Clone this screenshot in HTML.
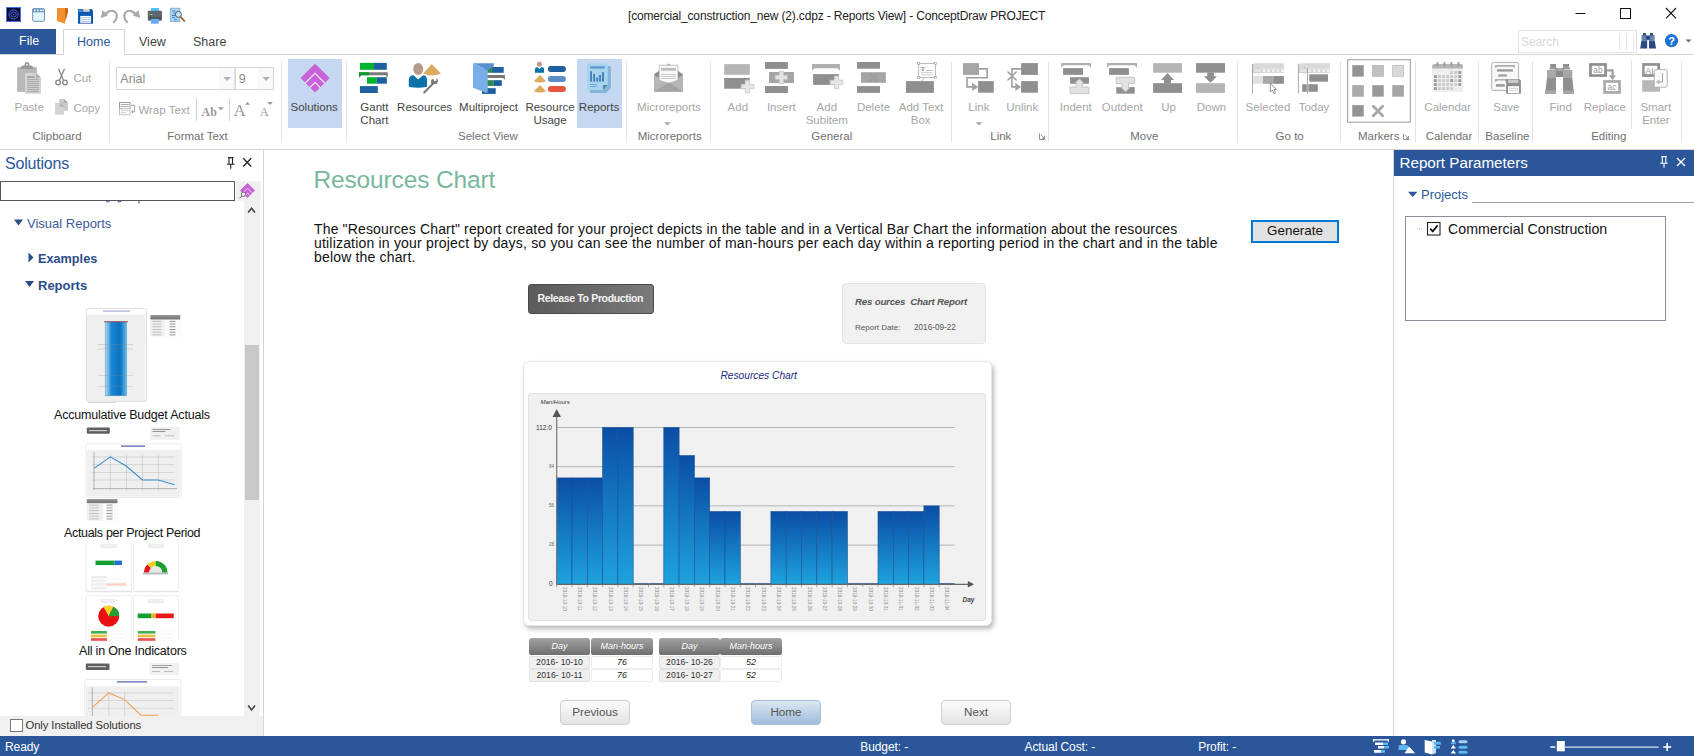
<!DOCTYPE html>
<html><head><meta charset="utf-8">
<style>
*{margin:0;padding:0;box-sizing:border-box}
html,body{width:1694px;height:756px;overflow:hidden;background:#fff;font-family:"Liberation Sans",sans-serif;color:#444}
.a{position:absolute;white-space:nowrap}
.rl{position:absolute;font-size:12px;color:#a0a0a0;text-align:center;line-height:13px;white-space:nowrap}
.gl{position:absolute;font-size:12px;color:#666;white-space:nowrap;top:129px}
.sep{position:absolute;top:61px;width:1px;height:80px;background:#e1e1e1}
</style></head><body>
<!-- title bar -->
<div class="a" style="left:628px;top:8.5px;font-size:12px;color:#222;letter-spacing:-0.165px">[comercial_construction_new (2).cdpz - Reports View] - ConceptDraw PROJECT</div>
<!-- tabs -->
<div class="a" style="left:0;top:29px;width:56px;height:25px;background:#2b579a;color:#fff;font-size:12.5px;line-height:25px;padding-left:19px">File</div>
<div class="a" style="left:63px;top:29px;width:62px;height:26px;border:1px solid #d5d5d5;border-bottom:none;background:#fff"></div>
<div class="a" style="left:0;top:54px;width:1694px;height:1px;background:#d5d5d5"></div>
<div class="a" style="left:64px;top:54px;width:60px;height:1px;background:#fff"></div>
<div class="a" style="left:77px;top:35px;font-size:12.5px;color:#2b579a">Home</div>
<div class="a" style="left:139px;top:35px;font-size:12.5px;color:#444">View</div>
<div class="a" style="left:193px;top:35px;font-size:12.5px;color:#444">Share</div>
<!-- ribbon bottom -->
<div class="a" style="left:0;top:149px;width:1694px;height:1px;background:#d5d5d5"></div>
<!--RIBBON-->
<div class="a" style="left:288px;top:59px;width:54px;height:69px;background:#c5d7f1"></div>
<div class="a" style="left:577px;top:59px;width:45px;height:69px;background:#c5d7f1"></div>
<div class="a" style="left:109px;top:61px;width:1px;height:81px;background:#e2e2e2"></div>
<div class="a" style="left:281px;top:61px;width:1px;height:81px;background:#e2e2e2"></div>
<div class="a" style="left:346px;top:61px;width:1px;height:81px;background:#e2e2e2"></div>
<div class="a" style="left:626px;top:61px;width:1px;height:81px;background:#e2e2e2"></div>
<div class="a" style="left:710px;top:61px;width:1px;height:81px;background:#e2e2e2"></div>
<div class="a" style="left:951px;top:61px;width:1px;height:81px;background:#e2e2e2"></div>
<div class="a" style="left:1048px;top:61px;width:1px;height:81px;background:#e2e2e2"></div>
<div class="a" style="left:1237px;top:61px;width:1px;height:81px;background:#e2e2e2"></div>
<div class="a" style="left:1340px;top:61px;width:1px;height:81px;background:#e2e2e2"></div>
<div class="a" style="left:1415px;top:61px;width:1px;height:81px;background:#e2e2e2"></div>
<div class="a" style="left:1478px;top:61px;width:1px;height:81px;background:#e2e2e2"></div>
<div class="a" style="left:1532px;top:61px;width:1px;height:81px;background:#e2e2e2"></div>
<div class="a" style="left:1681px;top:61px;width:1px;height:81px;background:#e2e2e2"></div>
<div class="a" style="left:1631px;top:60px;width:1px;height:69px;background:#e2e2e2"></div>
<div class="a" style="left:-3px;width:120px;top:129px;height:14px;line-height:14px;text-align:center;font-size:11.5px;color:#707070">Clipboard</div>
<div class="a" style="left:137.5px;width:120px;top:129px;height:14px;line-height:14px;text-align:center;font-size:11.5px;color:#707070">Format Text</div>
<div class="a" style="left:428px;width:120px;top:129px;height:14px;line-height:14px;text-align:center;font-size:11.5px;color:#707070">Select View</div>
<div class="a" style="left:609.7px;width:120px;top:129px;height:14px;line-height:14px;text-align:center;font-size:11.5px;color:#707070">Microreports</div>
<div class="a" style="left:771.8px;width:120px;top:129px;height:14px;line-height:14px;text-align:center;font-size:11.5px;color:#707070">General</div>
<div class="a" style="left:940.8px;width:120px;top:129px;height:14px;line-height:14px;text-align:center;font-size:11.5px;color:#707070">Link</div>
<div class="a" style="left:1084.3px;width:120px;top:129px;height:14px;line-height:14px;text-align:center;font-size:11.5px;color:#707070">Move</div>
<div class="a" style="left:1229.7px;width:120px;top:129px;height:14px;line-height:14px;text-align:center;font-size:11.5px;color:#707070">Go to</div>
<div class="a" style="left:1318.7px;width:120px;top:129px;height:14px;line-height:14px;text-align:center;font-size:11.5px;color:#707070">Markers</div>
<div class="a" style="left:1389px;width:120px;top:129px;height:14px;line-height:14px;text-align:center;font-size:11.5px;color:#707070">Calendar</div>
<div class="a" style="left:1447.4px;width:120px;top:129px;height:14px;line-height:14px;text-align:center;font-size:11.5px;color:#707070">Baseline</div>
<div class="a" style="left:1548.8px;width:120px;top:129px;height:14px;line-height:14px;text-align:center;font-size:11.5px;color:#707070">Editing</div>
<div class="a" style="left:-30.8px;width:120px;top:100px;height:14px;line-height:14px;text-align:center;font-size:11.5px;color:#a6a6a6">Paste</div>
<div class="a" style="left:73.4px;top:70.6px;height:14px;line-height:14px;font-size:11.5px;color:#a6a6a6">Cut</div>
<div class="a" style="left:73.4px;top:101px;height:14px;line-height:14px;font-size:11.5px;color:#a6a6a6">Copy</div>
<div class="a" style="left:138.4px;top:103px;height:14px;line-height:14px;font-size:11.5px;color:#a6a6a6">Wrap Text</div>
<div class="a" style="left:254.2px;width:120px;top:100px;height:14px;line-height:14px;text-align:center;font-size:11.5px;color:#444">Solutions</div>
<div class="a" style="left:314.4px;width:120px;top:100px;height:14px;line-height:14px;text-align:center;font-size:11.5px;color:#444">Gantt</div>
<div class="a" style="left:314.4px;width:120px;top:113px;height:14px;line-height:14px;text-align:center;font-size:11.5px;color:#444">Chart</div>
<div class="a" style="left:364.6px;width:120px;top:100px;height:14px;line-height:14px;text-align:center;font-size:11.5px;color:#444">Resources</div>
<div class="a" style="left:428.5px;width:120px;top:100px;height:14px;line-height:14px;text-align:center;font-size:11.5px;color:#444">Multiproject</div>
<div class="a" style="left:490px;width:120px;top:100px;height:14px;line-height:14px;text-align:center;font-size:11.5px;color:#444">Resource</div>
<div class="a" style="left:490px;width:120px;top:113px;height:14px;line-height:14px;text-align:center;font-size:11.5px;color:#444">Usage</div>
<div class="a" style="left:539px;width:120px;top:100px;height:14px;line-height:14px;text-align:center;font-size:11.5px;color:#444">Reports</div>
<div class="a" style="left:609px;width:120px;top:100px;height:14px;line-height:14px;text-align:center;font-size:11.5px;color:#a6a6a6">Microreports</div>
<div class="a" style="left:677.8px;width:120px;top:100px;height:14px;line-height:14px;text-align:center;font-size:11.5px;color:#a6a6a6">Add</div>
<div class="a" style="left:721.3px;width:120px;top:100px;height:14px;line-height:14px;text-align:center;font-size:11.5px;color:#a6a6a6">Insert</div>
<div class="a" style="left:766.8px;width:120px;top:100px;height:14px;line-height:14px;text-align:center;font-size:11.5px;color:#a6a6a6">Add</div>
<div class="a" style="left:766.8px;width:120px;top:113px;height:14px;line-height:14px;text-align:center;font-size:11.5px;color:#a6a6a6">Subitem</div>
<div class="a" style="left:813.5px;width:120px;top:100px;height:14px;line-height:14px;text-align:center;font-size:11.5px;color:#a6a6a6">Delete</div>
<div class="a" style="left:861px;width:120px;top:100px;height:14px;line-height:14px;text-align:center;font-size:11.5px;color:#a6a6a6">Add Text</div>
<div class="a" style="left:860.7px;width:120px;top:113px;height:14px;line-height:14px;text-align:center;font-size:11.5px;color:#a6a6a6">Box</div>
<div class="a" style="left:918.9px;width:120px;top:100px;height:14px;line-height:14px;text-align:center;font-size:11.5px;color:#a6a6a6">Link</div>
<div class="a" style="left:962.2px;width:120px;top:100px;height:14px;line-height:14px;text-align:center;font-size:11.5px;color:#a6a6a6">Unlink</div>
<div class="a" style="left:1015.8px;width:120px;top:100px;height:14px;line-height:14px;text-align:center;font-size:11.5px;color:#a6a6a6">Indent</div>
<div class="a" style="left:1062.3px;width:120px;top:100px;height:14px;line-height:14px;text-align:center;font-size:11.5px;color:#a6a6a6">Outdent</div>
<div class="a" style="left:1108.5px;width:120px;top:100px;height:14px;line-height:14px;text-align:center;font-size:11.5px;color:#a6a6a6">Up</div>
<div class="a" style="left:1151.4px;width:120px;top:100px;height:14px;line-height:14px;text-align:center;font-size:11.5px;color:#a6a6a6">Down</div>
<div class="a" style="left:1208px;width:120px;top:100px;height:14px;line-height:14px;text-align:center;font-size:11.5px;color:#a6a6a6">Selected</div>
<div class="a" style="left:1254px;width:120px;top:100px;height:14px;line-height:14px;text-align:center;font-size:11.5px;color:#a6a6a6">Today</div>
<div class="a" style="left:1387.7px;width:120px;top:100px;height:14px;line-height:14px;text-align:center;font-size:11.5px;color:#a6a6a6">Calendar</div>
<div class="a" style="left:1446.4px;width:120px;top:100px;height:14px;line-height:14px;text-align:center;font-size:11.5px;color:#a6a6a6">Save</div>
<div class="a" style="left:1500.7px;width:120px;top:100px;height:14px;line-height:14px;text-align:center;font-size:11.5px;color:#a6a6a6">Find</div>
<div class="a" style="left:1544.9px;width:120px;top:100px;height:14px;line-height:14px;text-align:center;font-size:11.5px;color:#a6a6a6">Replace</div>
<div class="a" style="left:1595.8px;width:120px;top:100px;height:14px;line-height:14px;text-align:center;font-size:11.5px;color:#a6a6a6">Smart</div>
<div class="a" style="left:1595.9px;width:120px;top:113px;height:14px;line-height:14px;text-align:center;font-size:11.5px;color:#a6a6a6">Enter</div>
<svg class="a" style="left:0;top:0" width="1694" height="150"><rect x="6.5" y="7.5" width="14" height="14" fill="#0b1030" stroke="#4a6cf0" stroke-width="1"/><circle cx="13.6" cy="14.5" r="4.6" fill="none" stroke="#4a6ae8" stroke-width="1"/><circle cx="13.6" cy="14.5" r="2.6" fill="none" stroke="#4a6ae8" stroke-width="0.9"/><circle cx="13.6" cy="14.5" r="0.8" fill="#4a6ae8"/><rect x="32.7" y="8.7" width="11.8" height="12.6" rx="1" fill="#e2f5fc" stroke="#6a90b8" stroke-width="1"/><rect x="32.7" y="8.7" width="11.8" height="3.6" fill="#6a90b8"/><rect x="34" y="9.6" width="1.8" height="1.6" fill="#dff"/><rect x="37" y="9.6" width="1.8" height="1.6" fill="#dff"/><rect x="40" y="9.6" width="1.8" height="1.6" fill="#dff"/><rect x="42.4" y="9.6" width="1.6" height="1.6" fill="#dff"/><polygon points="57,8 67.9,8 67.9,12 65,22 65,23.8 57,21" fill="#f0922e"/><polygon points="65,8.5 67.9,8 67.9,12 65.5,21" fill="#c8661a"/><path d="M78,9 H91.5 L93,10.5 V23.8 H78 Z" fill="#0a58b0"/><rect x="83.2" y="9" width="6.5" height="2.8" fill="#d8d2ca"/><rect x="78.6" y="9.2" width="4" height="2.8" fill="#4a88d8"/><rect x="80.3" y="15.9" width="10.6" height="7.2" fill="#fff"/><rect x="81" y="17.2" width="9" height="0.8" fill="#9ac4e8"/><rect x="81" y="19.2" width="9" height="0.8" fill="#9ac4e8"/><rect x="81" y="21.2" width="9" height="0.8" fill="#9ac4e8"/><rect x="80.3" y="22.6" width="10.6" height="0.7" fill="#c890d8"/><path d="M104.5,15.4 C107,11 112,9.5 115,12 C118,14.5 117,19.5 113.3,22.8" fill="none" stroke="#aaa" stroke-width="2.2"/><polygon points="100.8,17.9 102.5,10 108.2,15.6" fill="#aaa"/><path d="M136.5,15.4 C134,11 129,9.5 126,12 C123,14.5 124,19.5 127.7,22.8" fill="none" stroke="#aaa" stroke-width="2.2"/><polygon points="140.2,17.9 138.5,10 132.8,15.6" fill="#aaa"/><rect x="150.8" y="7.9" width="8.2" height="3.5" rx="0.8" fill="#4ec2fa"/><rect x="147.8" y="10.8" width="14.2" height="10" rx="1" fill="#5d666b"/><rect x="149.3" y="14" width="1.2" height="1" fill="#5fd05a"/><rect x="151.2" y="14" width="1.2" height="1" fill="#ddd"/><rect x="149" y="17.5" width="12" height="1.2" fill="#3a4246"/><rect x="151" y="18.8" width="7.8" height="4.9" fill="#6aa8f8"/><rect x="170.3" y="8.2" width="9.6" height="13.4" fill="#aad8f2" stroke="#7aa8c8" stroke-width="0.8"/><rect x="172" y="10.5" width="3.5" height="0.9" fill="#3a70d0"/><rect x="173" y="12.8" width="3" height="0.9" fill="#3a70d0"/><rect x="172" y="15" width="3.5" height="0.9" fill="#3a70d0"/><rect x="172" y="17.2" width="3" height="0.9" fill="#3a70d0"/><rect x="174" y="19.3" width="3" height="0.9" fill="#3a70d0"/><circle cx="178.4" cy="14.4" r="3" fill="rgba(220,240,255,0.6)" stroke="#555" stroke-width="1"/><line x1="180.6" y1="16.7" x2="184.8" y2="21.6" stroke="#a04a20" stroke-width="1.6"/><line x1="1575.5" y1="13.5" x2="1585.5" y2="13.5" stroke="#111" stroke-width="1"/><rect x="1620.5" y="8.5" width="10" height="10" fill="none" stroke="#111" stroke-width="1"/><path d="M1666,8 L1676,18.3 M1676,8 L1666,18.3" stroke="#111" stroke-width="1.1"/><rect x="1518.5" y="30.5" width="118" height="22" fill="#fff" stroke="#e2e2e2" stroke-width="1"/><text x="1521" y="46" font-size="12" fill="#d8d8d8" font-family="Liberation Sans">Search</text><line x1="1619.5" y1="34" x2="1619.5" y2="50" stroke="#e4e4e4"/><line x1="1626.5" y1="34" x2="1626.5" y2="50" stroke="#e4e4e4"/><line x1="1633.5" y1="34" x2="1633.5" y2="50" stroke="#e4e4e4"/><polygon points="1641.3,41 1647.2,41 1647.2,48.6 1640.2,48.6" fill="#2b4a80"/><polygon points="1649,41 1654.8,41 1656,48.6 1649,48.6" fill="#2b4a80"/><rect x="1641.5" y="35" width="5.8" height="6.2" fill="#6a84b0"/><rect x="1648.8" y="35" width="5.8" height="6.2" fill="#6a84b0"/><rect x="1643" y="33" width="3" height="2.5" fill="#2b4a80"/><rect x="1650" y="33" width="3" height="2.5" fill="#2b4a80"/><circle cx="1648" cy="37.8" r="2.2" fill="#2b4a80"/><circle cx="1671.5" cy="40.7" r="6.6" fill="#1a72d0"/><text x="1671.5" y="45" font-size="11" font-weight="bold" fill="#fff" text-anchor="middle" font-family="Liberation Sans">?</text><polygon points="1685.5,39.5 1691.5,39.5 1688.5,42.5" fill="#666"/><rect x="17.1" y="66.9" width="19.8" height="25.1" rx="1.5" fill="#b8b8b8"/><path d="M20.9,69 V67.5 Q20.9,65.5 23,65.5 H24.5 Q24.5,62.1 27,62.1 Q29.5,62.1 29.5,65.5 H31 Q33,65.5 33,67.5 V69 Z" fill="#999"/><circle cx="27" cy="64.6" r="0.9" fill="#fff"/><polygon points="25,73 36,73 41,77.8 41,93.7 25,93.7" fill="#d4d4d4"/><polygon points="36,73 41,77.8 36,77.8" fill="#aaa"/><rect x="27.1" y="76.3" width="7.70" height="1.60" fill="#9a9a9a" /><rect x="27.1" y="79.2" width="11.80" height="0.90" fill="#a0a0a0" /><rect x="27.1" y="81.2" width="11.80" height="0.90" fill="#a0a0a0" /><rect x="27.1" y="83.2" width="11.80" height="0.90" fill="#a0a0a0" /><rect x="27.1" y="85.2" width="11.80" height="0.90" fill="#a0a0a0" /><rect x="27.1" y="87.2" width="11.80" height="0.90" fill="#a0a0a0" /><rect x="27.1" y="89.2" width="11.80" height="0.90" fill="#a0a0a0" /><rect x="27.1" y="91.2" width="11.80" height="0.90" fill="#a0a0a0" /><polygon points="57.9,69 59.3,68.8 64.2,80.3 62.9,80.6" fill="#8a8a8a"/><polygon points="65.1,69 63.7,68.8 58.8,80.3 60.1,80.6" fill="#8a8a8a"/><circle cx="58.1" cy="82.4" r="2.3" fill="none" stroke="#8a8a8a" stroke-width="1.4"/><circle cx="65" cy="82.4" r="2.3" fill="none" stroke="#8a8a8a" stroke-width="1.4"/><polygon points="59.2,99 64.1,99 67.9,102.7 67.9,110.8 59.2,110.8" fill="#c8c8c8"/><polygon points="64.1,99 67.9,102.7 64.1,102.7" fill="#aaa"/><polygon points="55.1,103.1 60.2,103.1 63.9,106.8 63.9,114.8 55.1,114.8" fill="#d3d3d3"/><polygon points="60.2,103.1 63.9,106.8 60.2,106.8" fill="#ababab"/><rect x="116.5" y="67.5" width="157" height="22" fill="#fff" stroke="#d8d8d8" stroke-width="1"/><rect x="218.9" y="68" width="15.10" height="21.00" fill="#f9f9f9" /><rect x="257.5" y="68" width="15.50" height="21.00" fill="#f9f9f9" /><rect x="234.3" y="68" width="1.70" height="21.00" fill="#d8d8d8" /><text x="120.3" y="83" font-size="12.5" fill="#8a8a8a" font-family="Liberation Sans">Arial</text><text x="238.8" y="83" font-size="12.5" fill="#8a8a8a" font-family="Liberation Sans">9</text><polygon points="223.3,77 231,77 227.15,81" fill="#b0b0b0"/><polygon points="262.5,77 269.9,77 266.2,81" fill="#b0b0b0"/><rect x="119.5" y="102.5" width="10.5" height="6" fill="#fff" stroke="#9a9a9a" stroke-width="1"/><rect x="120.8" y="104.1" width="8" height="0.8" fill="#999"/><rect x="120.8" y="106.2" width="8" height="0.8" fill="#999"/><rect x="119.5" y="108.7" width="10.5" height="6" fill="#fff" stroke="#c4c4c4" stroke-width="1"/><rect x="120.8" y="110.4" width="8" height="0.7" fill="#bbb"/><rect x="120.8" y="112.4" width="5.5" height="0.7" fill="#bbb"/><path d="M131,105.2 H134.6 V111.8 H132" fill="none" stroke="#999" stroke-width="0.9"/><polygon points="131,111.8 133,110.2 133,113.4" fill="#999"/><line x1="196.5" y1="98" x2="196.5" y2="120.7" stroke="#c9d3e6" stroke-width="1"/><line x1="229.5" y1="98" x2="229.5" y2="120.7" stroke="#c9d3e6" stroke-width="1"/><text x="201.5" y="115.8" font-size="12" font-weight="bold" fill="#9a9a9a" font-family="Liberation Serif">Ab</text><polygon points="217.9,107.2 223.9,107.2 220.9,110.2" fill="#9a9a9a"/><text x="233.6" y="115.8" font-size="17" fill="#9a9a9a" font-family="Liberation Serif">A</text><polygon points="245,104.7 250,104.7 247.5,102" fill="#9a9a9a"/><text x="259.8" y="115.8" font-size="12.5" fill="#9a9a9a" font-family="Liberation Serif">A</text><polygon points="267,102 273,102 270,104.9" fill="#9a9a9a"/><polygon points="315,63.7 329.7,78.1 315,92.5 300.6,78.1" fill="#c862d8"/><polyline points="305.2,83 315,73.3 324.8,83" fill="none" stroke="#f3e2f7" stroke-width="1.3"/><polyline points="309.8,87.6 315,82.4 320.2,87.6" fill="none" stroke="#f3e2f7" stroke-width="1.3"/><rect x="359.9" y="62.9" width="14.10" height="6.90" fill="#00b32c" /><rect x="374" y="62.9" width="12.80" height="6.90" fill="#1e5fa0" /><polygon points="359,72.2 387.8,72.2 387.8,77.5 385.5,75.2 361.3,75.2 359,77.5" fill="#7a7a7a"/><polygon points="359,72.2 369.1,72.2 369.1,75.2 361.3,75.2 359,77.5" fill="#0a9a2a"/><rect x="367" y="77.2" width="9.90" height="6.50" fill="#00b32c" /><rect x="376.9" y="77.2" width="9.90" height="6.50" fill="#1e5fa0" /><rect x="359.9" y="86.1" width="17.90" height="6.90" fill="#1e5fa0" /><ellipse cx="418.2" cy="69" rx="5" ry="5.9" fill="#b59a88"/><path d="M408.8,86.8 V80 Q408.8,75.2 413.5,75.2 L418.2,79.5 L423,75.2 Q427,75.2 427,80 V86.8 Q418,88.5 408.8,86.8 Z" fill="#0a72a8"/><path d="M431.7,64.1 L423.2,73.4 Q431.7,77.5 440.9,73.4 Z" fill="#dcaa5c"/><path d="M424.2,92.5 L434.2,82.4" stroke="#777" stroke-width="2" stroke-linecap="round"/><path d="M431.8,84.3 Q429.5,80 433.5,78.7 L434.2,81.5 L436.5,80.8 L436.2,78 Q439.8,80 436.4,84 Z" fill="#777"/><rect x="483.9" y="67" width="8.00" height="5.80" fill="#2a8a50" /><rect x="491.9" y="67" width="11.80" height="5.80" fill="#1e5fa0" /><polygon points="486,75 504.9,75 504.9,79.8 503,78 486,78" fill="#777"/><rect x="486" y="80.2" width="7.80" height="5.70" fill="#2a8a50" /><rect x="493.8" y="80.2" width="8.00" height="5.70" fill="#1e5fa0" /><rect x="482" y="88.2" width="13.70" height="5.70" fill="#1e5fa0" /><polygon points="473,63.2 493.8,63.2 493.8,66 487.7,70.3" fill="#5a8fd0"/><path d="M473,63.2 L487.7,70.3 V91.5 Q487.7,93.3 485.5,92.6 L473,87.8 Z" fill="#7aaee8"/><circle cx="539.4" cy="64.3" r="2.5" fill="#b59a88"/><path d="M534.9,72.8 V69.5 Q534.9,67 537.3,67 L539.4,69 L541.6,67 Q544.1,67 544.1,69.5 V72.8 Z" fill="#0a72a8"/><rect x="547.9" y="66" width="18" height="5.9" rx="2.95" fill="#1e5fa0"/><rect x="547.9" y="76.1" width="18" height="5.9" rx="2.95" fill="#5a8fc8"/><rect x="547.9" y="86" width="18" height="5.9" rx="2.95" fill="#e65540"/><path d="M540,75 L533.8,81.3 Q540,83.8 546.1,81.3 Z" fill="#dcaa5c"/><path d="M540,84.9 L533.8,91.2 Q540,93.7 546.1,91.2 Z" fill="#dcaa5c"/><polygon points="589.9,66 610.9,66 610.9,88 605.9,93 589.9,93" fill="#86b4d6"/><polygon points="587,63.2 607.8,63.2 607.8,84.9 602.9,89.9 587,89.9" fill="#a8d4ee"/><polygon points="602.9,89.9 602.9,84.9 607.8,84.9" fill="#5a8ab0"/><rect x="590.1" y="66.3" width="14.70" height="2.30" fill="#5a9ad0" /><rect x="590.1" y="71.2" width="1.80" height="10.40" fill="#3d7ab8" /><rect x="593.2" y="74" width="1.80" height="7.60" fill="#3d7ab8" /><rect x="596.3" y="77.4" width="1.80" height="4.20" fill="#3d7ab8" /><rect x="599.1" y="75" width="1.80" height="6.60" fill="#3d7ab8" /><rect x="602.1" y="72.2" width="1.80" height="9.40" fill="#3d7ab8" /><rect x="590" y="84" width="6.70" height="0.80" fill="#5a9ad0" /><rect x="590" y="86" width="6.70" height="0.80" fill="#5a9ad0" /><polygon points="654,74.5 668.4,63.2 683,74.5 683,91.8 654,91.8" fill="#b5b5b5"/><polygon points="654,74.5 659.2,71 659.2,78 " fill="#8a8a8a"/><polygon points="683,74.5 677.9,71 677.9,78" fill="#8a8a8a"/><polygon points="659.2,65.2 677.9,65.2 677.9,80.3 668.4,83.5 659.2,80.3" fill="#f8f8f8" stroke="#aaa" stroke-width="0.7"/><rect x="661" y="67.9" width="15.00" height="2.80" fill="#bdbdbd" /><rect x="661" y="74.2" width="15.00" height="0.70" fill="#b5b5b5" /><rect x="661" y="76.1" width="15.00" height="0.70" fill="#b5b5b5" /><rect x="661" y="78" width="15.00" height="0.70" fill="#b5b5b5" /><polygon points="654,91.8 668.4,82.3 683,91.8" fill="#a3a3a3"/><polygon points="664,122.3 671,122.3 667.5,125.5" fill="#aaa"/><rect x="724.2" y="64.1" width="25.60" height="10.70" fill="#b5b5b5" /><rect x="724.2" y="78" width="25.60" height="10.70" fill="#8f8f8f" /><polygon points="745.30,80.15 749.70,80.15 749.70,84.30 753.85,84.30 753.85,88.70 749.70,88.70 749.70,92.85 745.30,92.85 745.30,88.70 741.15,88.70 741.15,84.30 745.30,84.30" fill="#e6e6e6" stroke="#c8c8c8" stroke-width="0.8"/><rect x="765" y="62" width="22.90" height="6.90" fill="#8f8f8f" /><rect x="769" y="72" width="25.00" height="11.00" fill="#a5a5a5" /><rect x="765" y="86" width="22.90" height="7.00" fill="#8f8f8f" /><polygon points="779.20,71.20 783.60,71.20 783.60,75.20 787.60,75.20 787.60,79.60 783.60,79.60 783.60,83.60 779.20,83.60 779.20,79.60 775.20,79.60 775.20,75.20 779.20,75.20" fill="#e3e3e3" stroke="#c0c0c0" stroke-width="0.8"/><polygon points="812,64 839.9,64 839.9,70.8 837.4,68.3 814.5,68.3 812,70.8" fill="#b0b0b0"/><rect x="813.1" y="74.1" width="25.80" height="10.80" fill="#8f8f8f" /><polygon points="834.30,76.10 838.70,76.10 838.70,80.20 842.80,80.20 842.80,84.60 838.70,84.60 838.70,88.70 834.30,88.70 834.30,84.60 830.20,84.60 830.20,80.20 834.30,80.20" fill="#e6e6e6" stroke="#c8c8c8" stroke-width="0.8"/><rect x="857" y="62" width="23.00" height="6.70" fill="#8f8f8f" /><rect x="861" y="72.2" width="24.80" height="10.60" fill="#a5a5a5" /><rect x="857" y="86.1" width="23.00" height="6.80" fill="#8f8f8f" /><path d="M869.5,73.5 L877.5,81.5 M877.5,73.5 L869.5,81.5" stroke="#979797" stroke-width="2.2"/><path d="M869.5,73.5 L877.5,81.5 M877.5,73.5 L869.5,81.5" stroke="#a8a8a8" stroke-width="0.9"/><rect x="906" y="81.1" width="27.90" height="11.80" fill="#8f8f8f" /><line x1="924.4" y1="77.7" x2="921.5" y2="81.1" stroke="#aaa" stroke-width="0.8"/><rect x="918.7" y="63.5" width="16.8" height="14" fill="#fff" stroke="#aaa" stroke-width="0.8"/><rect x="917.6" y="62.4" width="2.2" height="2.2" fill="#fff" stroke="#999" stroke-width="0.6"/><rect x="934.4" y="62.4" width="2.2" height="2.2" fill="#fff" stroke="#999" stroke-width="0.6"/><rect x="917.6" y="76.4" width="2.2" height="2.2" fill="#fff" stroke="#999" stroke-width="0.6"/><rect x="934.4" y="76.4" width="2.2" height="2.2" fill="#fff" stroke="#999" stroke-width="0.6"/><text x="920.5" y="71" font-size="7" font-weight="bold" fill="#888" font-family="Liberation Serif">T</text><rect x="926" y="70" width="6.80" height="0.70" fill="#aaa" /><rect x="921" y="72.5" width="11.80" height="0.60" fill="#aaa" /><rect x="921" y="74.6" width="11.80" height="0.60" fill="#aaa" /><polygon points="975.5,122.3 982.5,122.3 979,125.5" fill="#aaa"/><rect x="963" y="63.1" width="16.00" height="11.80" fill="#a5a5a5" /><rect x="978.1" y="81.1" width="15.70" height="11.60" fill="#8f8f8f" /><path d="M979,68.9 H987.1 V77.8 H967 V86.9 H973" fill="none" stroke="#a0a0a0" stroke-width="1.6"/><polygon points="972.2,82.8 972.2,91 978.2,86.9" fill="#a0a0a0"/><rect x="1021.1" y="63.1" width="16.80" height="11.80" fill="#8f8f8f" /><rect x="1021.1" y="81.1" width="16.80" height="11.60" fill="#8f8f8f" /><path d="M1021.1,68.9 H1011.9 V86.9 H1016" fill="none" stroke="#a0a0a0" stroke-width="1.6"/><polygon points="1015.3,82.8 1015.3,91 1021,86.9" fill="#a0a0a0"/><path d="M1008,72 L1016.2,80 M1016.2,72 L1008,80" stroke="#a0a0a0" stroke-width="1.6" stroke-linecap="round"/><path d="M1039.5,133.5 V139.5 H1045.5" fill="none" stroke="#888" stroke-width="0.9"/><path d="M1041,135 L1044.5,138.5 M1044.5,136 V138.5 H1042" fill="none" stroke="#888" stroke-width="0.9"/><polygon points="1061.2,63.1 1091,63.1 1091,67.8 1088.5,65.2 1063.7,65.2 1061.2,67.8" fill="#b0b0b0"/><rect x="1063.1" y="68.1" width="19.90" height="6.80" fill="#8f8f8f" /><rect x="1070.1" y="77.2" width="18.80" height="6.60" fill="#8f8f8f" /><polygon points="1079.4,79.1 1083.9,82.8 1082.3,82.8 1082.3,87.1 1088.9,87.1 1088.9,93.7 1070.1,93.7 1070.1,87.1 1076.3,87.1 1076.3,82.8 1074.8,82.8" fill="#e2e2e2" stroke="#bbb" stroke-width="0.8"/><polygon points="1107,63.1 1137,63.1 1137,67.8 1134.5,65.2 1109.5,65.2 1107,67.8" fill="#b0b0b0"/><rect x="1109.1" y="68.1" width="19.80" height="6.80" fill="#8f8f8f" /><rect x="1116.3" y="87.1" width="18.40" height="6.60" fill="#8f8f8f" /><polygon points="1116.3,77.3 1134.7,77.3 1134.7,83.5 1128.5,83.5 1128.5,87.3 1130.2,87.3 1125.5,91.9 1121,87.3 1122.3,87.3 1122.3,83.5 1116.3,83.5" fill="#e2e2e2" stroke="#bbb" stroke-width="0.8"/><rect x="1153.1" y="63.1" width="28.90" height="9.60" fill="#b5b5b5" /><rect x="1153.1" y="83.2" width="28.90" height="9.70" fill="#8f8f8f" /><polygon points="1167.5,72.9 1174.1,79.9 1170.9,79.9 1170.9,83.5 1164,83.5 1164,79.9 1161,79.9" fill="#8f8f8f"/><rect x="1196" y="63.1" width="29.00" height="9.60" fill="#8f8f8f" /><rect x="1196" y="83.2" width="29.00" height="9.70" fill="#b5b5b5" /><polygon points="1207.2,72.5 1213.9,72.5 1213.9,76.2 1217.1,76.2 1210.5,82.8 1203.7,76.2 1207.2,76.2" fill="#8f8f8f"/><path d="M1252.5,69 V65.5 Q1252.5,63.2 1255.0,63.2 H1283.9 V68.2 H1252.5 Z" fill="#d9d9d9"/><rect x="1252.5" y="68.5" width="31.40" height="4.30" fill="#d0d0d0" /><rect x="1262.5" y="69.3" width="3.00" height="2.70" fill="#f2f2f2" /><rect x="1267.1" y="69.3" width="3.00" height="2.70" fill="#f2f2f2" /><rect x="1271.7" y="69.3" width="3.00" height="2.70" fill="#f2f2f2" /><rect x="1276.3" y="69.3" width="3.00" height="2.70" fill="#f2f2f2" /><rect x="1280.9" y="69.3" width="3.00" height="2.70" fill="#f2f2f2" /><polygon points="1253.5,69 1258.5,69 1258.5,67.5 1261.8,70.7 1258.5,73.8 1258.5,72.3 1253.5,72.3" fill="#e8e8e8" stroke="#bbb" stroke-width="0.5"/><line x1="1252.5" y1="64" x2="1252.5" y2="93.7" stroke="#aaa" stroke-width="1"/><path d="M1298.4,69 V65.5 Q1298.4,63.2 1300.9,63.2 H1329.8 V68.2 H1298.4 Z" fill="#d9d9d9"/><rect x="1298.4" y="68.5" width="31.40" height="4.30" fill="#d0d0d0" /><rect x="1308.4" y="69.3" width="3.00" height="2.70" fill="#f2f2f2" /><rect x="1313.0" y="69.3" width="3.00" height="2.70" fill="#f2f2f2" /><rect x="1317.6000000000001" y="69.3" width="3.00" height="2.70" fill="#f2f2f2" /><rect x="1322.2" y="69.3" width="3.00" height="2.70" fill="#f2f2f2" /><rect x="1326.8000000000002" y="69.3" width="3.00" height="2.70" fill="#f2f2f2" /><polygon points="1299.4,69 1304.4,69 1304.4,67.5 1307.7,70.7 1304.4,73.8 1304.4,72.3 1299.4,72.3" fill="#e8e8e8" stroke="#bbb" stroke-width="0.5"/><line x1="1298.4" y1="64" x2="1298.4" y2="93.7" stroke="#aaa" stroke-width="1"/><rect x="1253" y="76" width="9.80" height="7.80" fill="#e0e0e0" /><rect x="1262.8" y="76" width="11.20" height="7.80" fill="#a8a8a8" /><rect x="1274" y="76" width="9.90" height="7.80" fill="#8f8f8f" /><path d="M1270.3,83.1 V92 L1272.3,90 L1274,93.7 L1275.4,93 L1273.8,89.4 L1276.5,89.4 Z" fill="#fff" stroke="#666" stroke-width="0.7"/><line x1="1307.5" y1="68" x2="1307.5" y2="93.7" stroke="#aaa" stroke-width="1"/><rect x="1309.3" y="74.3" width="18.70" height="7.40" fill="#8f8f8f" /><rect x="1302.2" y="84.2" width="4.60" height="7.60" fill="#8f8f8f" /><rect x="1308.3" y="84.2" width="9.50" height="7.60" fill="#8f8f8f" /><rect x="1347.6" y="59.7" width="62.8" height="62.5" fill="#fff" stroke="#aaa" stroke-width="1.2"/><rect x="1352.5" y="65.4" width="11" height="11" fill="#939393" stroke="#888" stroke-opacity="0.5" stroke-width="0.7"/><rect x="1372.5" y="65.4" width="11" height="11" fill="#c0c0c0" stroke="#888" stroke-opacity="0.5" stroke-width="0.7"/><rect x="1392.6000000000001" y="65.4" width="11" height="11" fill="#d9d9d9" stroke="#888" stroke-opacity="0.5" stroke-width="0.7"/><rect x="1352.5" y="85.4" width="11" height="11" fill="#aaaaaa" stroke="#888" stroke-opacity="0.5" stroke-width="0.7"/><rect x="1372.5" y="85.4" width="11" height="11" fill="#989898" stroke="#888" stroke-opacity="0.5" stroke-width="0.7"/><rect x="1392.6000000000001" y="85.4" width="11" height="11" fill="#a5a5a5" stroke="#888" stroke-opacity="0.5" stroke-width="0.7"/><rect x="1352.5" y="105.30000000000001" width="11" height="11" fill="#939393" stroke="#888" stroke-opacity="0.5" stroke-width="0.7"/><path d="M1373.3,106.3 L1382.7,115.7 M1382.7,106.3 L1373.3,115.7" stroke="#a8a8a8" stroke-width="2.8" stroke-linecap="round"/><path d="M1403.5,133.5 V139.5 H1409.5" fill="none" stroke="#888" stroke-width="0.9"/><path d="M1405,135 L1408.5,138.5 M1408.5,136 V138.5 H1406" fill="none" stroke="#888" stroke-width="0.9"/><path d="M1432.1,68.8 V66 Q1432.1,64 1434.1,64 H1461 Q1463,64 1463,66 V68.8 Z" fill="#b5b5b5"/><rect x="1432.1" y="68.8" width="30.90" height="23.10" fill="#eeeeee" /><rect x="1436.5" y="62.1" width="1.80" height="4.20" fill="#999" /><rect x="1443.5" y="62.1" width="1.80" height="4.20" fill="#999" /><rect x="1450.5" y="62.1" width="1.80" height="4.20" fill="#999" /><rect x="1457.5" y="62.1" width="1.80" height="4.20" fill="#999" /><rect x="1450.2" y="71.1" width="2.90" height="2.90" fill="#cbcbcb" /><rect x="1454.25" y="71.1" width="2.90" height="2.90" fill="#cbcbcb" /><rect x="1458.3" y="71.1" width="2.90" height="2.90" fill="#9c9c9c" /><rect x="1434.0" y="75.1" width="2.90" height="2.90" fill="#9c9c9c" /><rect x="1438.05" y="75.1" width="2.90" height="2.90" fill="#cbcbcb" /><rect x="1442.1" y="75.1" width="2.90" height="2.90" fill="#cbcbcb" /><rect x="1446.15" y="75.1" width="2.90" height="2.90" fill="#cbcbcb" /><rect x="1450.2" y="75.1" width="2.90" height="2.90" fill="#cbcbcb" /><rect x="1454.25" y="75.1" width="2.90" height="2.90" fill="#cbcbcb" /><rect x="1458.3" y="75.1" width="2.90" height="2.90" fill="#9c9c9c" /><rect x="1434.0" y="79.1" width="2.90" height="2.90" fill="#9c9c9c" /><rect x="1438.05" y="79.1" width="2.90" height="2.90" fill="#cbcbcb" /><rect x="1442.1" y="79.1" width="2.90" height="2.90" fill="#cbcbcb" /><rect x="1446.15" y="79.1" width="2.90" height="2.90" fill="#cbcbcb" /><rect x="1450.2" y="79.1" width="2.90" height="2.90" fill="#9c9c9c" /><rect x="1454.25" y="79.1" width="2.90" height="2.90" fill="#cbcbcb" /><rect x="1458.3" y="79.1" width="2.90" height="2.90" fill="#9c9c9c" /><rect x="1434.0" y="83.1" width="2.90" height="2.90" fill="#9c9c9c" /><rect x="1438.05" y="83.1" width="2.90" height="2.90" fill="#cbcbcb" /><rect x="1442.1" y="83.1" width="2.90" height="2.90" fill="#cbcbcb" /><rect x="1446.15" y="83.1" width="2.90" height="2.90" fill="#cbcbcb" /><rect x="1450.2" y="83.1" width="2.90" height="2.90" fill="#cbcbcb" /><rect x="1454.25" y="83.1" width="2.90" height="2.90" fill="#cbcbcb" /><rect x="1458.3" y="83.1" width="2.90" height="2.90" fill="#9c9c9c" /><rect x="1434.0" y="87.1" width="2.90" height="2.90" fill="#9c9c9c" /><rect x="1438.05" y="87.1" width="2.90" height="2.90" fill="#cbcbcb" /><rect x="1442.1" y="87.1" width="2.90" height="2.90" fill="#cbcbcb" /><rect x="1446.15" y="87.1" width="2.90" height="2.90" fill="#cbcbcb" /><rect x="1450.2" y="87.1" width="2.90" height="2.90" fill="#cbcbcb" /><rect x="1491.6" y="62.4" width="27" height="28" rx="2" fill="#f7f7f7" stroke="#aaa" stroke-width="0.9"/><polygon points="1495,65 1514.9,65 1514.9,68 1512.4,66.8 1497.5,66.8 1495,68" fill="#b0b0b0"/><rect x="1497" y="69.2" width="16.00" height="2.40" fill="#9c9c9c" /><rect x="1498.2" y="74.4" width="8.70" height="2.20" fill="#9c9c9c" /><polygon points="1495,79 1507,79 1507,82 1504.5,80.6 1497.5,80.6 1495,82" fill="#b0b0b0"/><rect x="1496" y="84.1" width="8.80" height="2.60" fill="#9c9c9c" /><path d="M1506.1,79.1 H1519.5 L1520.9,80.5 V93.8 H1506.1 Z" fill="#8f8f8f"/><rect x="1508" y="79.5" width="10.50" height="3.50" fill="#c8c8c8" /><rect x="1508" y="86.2" width="11.00" height="6.80" fill="#fafafa" /><rect x="1509" y="88" width="9.00" height="0.50" fill="#bbb" /><rect x="1509" y="90.3" width="9.00" height="0.50" fill="#bbb" /><rect x="1550.2" y="64" width="5.80" height="3.80" fill="#8f8f8f" /><rect x="1563.1" y="64" width="5.90" height="3.80" fill="#8f8f8f" /><rect x="1549.5" y="67.6" width="7.50" height="1.90" fill="#9a9a9a" /><rect x="1562.3" y="67.6" width="7.70" height="1.90" fill="#9a9a9a" /><rect x="1555.5" y="68.3" width="8.50" height="8.70" fill="#8a8a8a" /><rect x="1556.5" y="68.8" width="6.50" height="2.20" fill="#a8a8a8" /><rect x="1547" y="70" width="9.00" height="8.20" fill="#a8a8a8" /><rect x="1563" y="70" width="9.30" height="8.20" fill="#a8a8a8" /><polygon points="1547,78 1556,78 1556,93.8 1545.1,93.8" fill="#8f8f8f"/><polygon points="1563,78 1572.3,78 1574,93.8 1563,93.8" fill="#8f8f8f"/><rect x="1545.1" y="90.5" width="10.90" height="3.30" fill="#a5a5a5" /><rect x="1563" y="90.5" width="11.00" height="3.30" fill="#a5a5a5" /><rect x="1589.1" y="63.1" width="17.80" height="13.80" fill="#8f8f8f" /><rect x="1591.8" y="65.8" width="12.40" height="8.40" fill="#fff" /><text x="1598" y="73.3" font-size="8.5" fill="#999" text-anchor="middle" font-family="Liberation Sans">ab</text><path d="M1606.9,70.4 H1612.6 V75.5" fill="none" stroke="#a0a0a0" stroke-width="2.2"/><polygon points="1608.9,75.2 1616,75.2 1612.5,79.9" fill="#a0a0a0"/><rect x="1603.2" y="80.1" width="17.70" height="13.70" fill="#aaaaaa" /><rect x="1605.9" y="82.8" width="12.30" height="8.20" fill="#fff" /><text x="1612" y="90.3" font-size="8.5" fill="#999" text-anchor="middle" font-family="Liberation Sans">ac</text><rect x="1642.2" y="63.1" width="17.80" height="13.80" fill="#8f8f8f" /><rect x="1644.6" y="65.8" width="12.80" height="8.40" fill="#fff" /><text x="1645.3" y="73.6" font-size="9" fill="#999" font-family="Liberation Sans">AI</text><rect x="1642.2" y="80.2" width="17.80" height="11.50" fill="#b8b8b8" /><rect x="1654.2" y="69.6" width="13" height="17.6" rx="1.5" fill="#fafafa" stroke="#aaa" stroke-width="0.9"/><path d="M1662.5,73 V82 H1657.5" fill="none" stroke="#999" stroke-width="0.9"/><polygon points="1656.5,82 1659,80.3 1659,83.7" fill="none" stroke="#999" stroke-width="0.7"/></svg>
<!--/RIBBON-->
<!--LEFT-->
<div class="a" style="left:263px;top:150px;width:1px;height:586px;background:#d5d5d5"></div>
<div class="a" style="left:5px;top:154.5px;font-size:16px;color:#2b579a;letter-spacing:-0.2px">Solutions</div>
<div class="a" style="left:0;top:200px;width:244px;height:516px;overflow:hidden"><div style="position:absolute;left:0;top:-200px;width:263px;height:736px"><svg class="a" style="left:0;top:0" width="263" height="736"><path d="M106,200.5 q1.5,3 4,0 M139,200 v3.5 M118,201 q1,2 3,0" stroke="#3b5a9a" stroke-width="1.1" fill="none"/><polygon points="14,219.5 23,219.5 18.5,225.5" fill="#2b4c8a"/><polygon points="28.5,252.5 33.5,257.5 28.5,262.5" fill="#2b4c8a"/><polygon points="25,281 34,281 29.5,287" fill="#2b4c8a"/><rect x="86.5" y="308.5" width="60" height="93" rx="1.5" fill="#fff" stroke="#e0e0e0"/><rect x="87" y="314.6" width="58.5" height="86.5" fill="#efefef"/><rect x="103" y="310.6" width="27" height="0.9" fill="#8a94c8"/><defs><linearGradient id="tb1" x1="0" x2="1"><stop offset="0" stop-color="#b8dcf4"/><stop offset="0.3" stop-color="#1a86d4"/><stop offset="0.7" stop-color="#0a70c0"/><stop offset="1" stop-color="#60c0ec"/></linearGradient><linearGradient id="tbl" x1="0" x2="0" y1="0" y2="1"><stop offset="0" stop-color="#9a9a9a"/><stop offset="1" stop-color="#707070"/></linearGradient></defs><rect x="105.2" y="321.8" width="21.4" height="74" fill="url(#tb1)" stroke="#5a90c0" stroke-width="0.5"/><rect x="104" y="321.4" width="24" height="0.8" fill="#a03030"/><line x1="98" y1="344.5" x2="133" y2="344.5" stroke="#888" stroke-width="0.4" opacity="0.7"/><line x1="98" y1="348.9" x2="133" y2="348.9" stroke="#888" stroke-width="0.4" opacity="0.7"/><line x1="98" y1="375.3" x2="133" y2="375.3" stroke="#888" stroke-width="0.4" opacity="0.7"/><line x1="98" y1="386.2" x2="133" y2="386.2" stroke="#888" stroke-width="0.4" opacity="0.7"/><rect x="150.4" y="315" width="29.8" height="4.5" fill="url(#tbl)"/><rect x="150.6" y="320.1" width="14" height="2.5" fill="#f2f2f2" stroke="#e4e4e4" stroke-width="0.3"/><rect x="165" y="320.1" width="15" height="2.5" fill="#fff" stroke="#eee" stroke-width="0.3"/><rect x="152.5" y="320.9" width="9" height="0.9" fill="#bbb"/><rect x="169.5" y="320.9" width="6" height="0.9" fill="#888"/><rect x="150.6" y="322.8" width="14" height="2.5" fill="#f2f2f2" stroke="#e4e4e4" stroke-width="0.3"/><rect x="165" y="322.8" width="15" height="2.5" fill="#fff" stroke="#eee" stroke-width="0.3"/><rect x="152.5" y="323.59999999999997" width="9" height="0.9" fill="#bbb"/><rect x="169.5" y="323.59999999999997" width="6" height="0.9" fill="#888"/><rect x="150.6" y="325.5" width="14" height="2.5" fill="#f2f2f2" stroke="#e4e4e4" stroke-width="0.3"/><rect x="165" y="325.5" width="15" height="2.5" fill="#fff" stroke="#eee" stroke-width="0.3"/><rect x="152.5" y="326.29999999999995" width="9" height="0.9" fill="#bbb"/><rect x="169.5" y="326.29999999999995" width="6" height="0.9" fill="#888"/><rect x="150.6" y="328.20000000000005" width="14" height="2.5" fill="#f2f2f2" stroke="#e4e4e4" stroke-width="0.3"/><rect x="165" y="328.20000000000005" width="15" height="2.5" fill="#fff" stroke="#eee" stroke-width="0.3"/><rect x="152.5" y="329.0" width="9" height="0.9" fill="#bbb"/><rect x="169.5" y="329.0" width="6" height="0.9" fill="#888"/><rect x="150.6" y="330.90000000000003" width="14" height="2.5" fill="#f2f2f2" stroke="#e4e4e4" stroke-width="0.3"/><rect x="165" y="330.90000000000003" width="15" height="2.5" fill="#fff" stroke="#eee" stroke-width="0.3"/><rect x="152.5" y="331.7" width="9" height="0.9" fill="#bbb"/><rect x="169.5" y="331.7" width="6" height="0.9" fill="#888"/><rect x="150.6" y="333.6" width="14" height="2.5" fill="#f2f2f2" stroke="#e4e4e4" stroke-width="0.3"/><rect x="165" y="333.6" width="15" height="2.5" fill="#fff" stroke="#eee" stroke-width="0.3"/><rect x="152.5" y="334.4" width="9" height="0.9" fill="#bbb"/><rect x="169.5" y="334.4" width="6" height="0.9" fill="#888"/><rect x="88" y="402" width="28" height="1" fill="#ddd"/><rect x="86.8" y="427.6" width="23" height="6.2" rx="1" fill="#606060"/><rect x="89" y="430" width="18" height="1.2" fill="#ccc"/><rect x="150.3" y="427.1" width="29.5" height="12.7" rx="1.5" fill="#f0f0f0"/><rect x="152.5" y="429" width="18" height="0.9" fill="#888"/><rect x="152.5" y="431" width="13" height="0.9" fill="#888"/><rect x="152.5" y="435.5" width="8" height="0.7" fill="#aaa"/><rect x="165" y="435.5" width="9" height="0.7" fill="#aaa"/><rect x="86" y="443.8" width="95.2" height="53.5" rx="2" fill="#fff" stroke="#e4e4e4" stroke-width="0.8"/><rect x="87" y="449.8" width="93.5" height="46.5" fill="#efefef"/><rect x="121" y="445.5" width="24" height="1.2" fill="#4a5aa8"/><line x1="92" y1="457" x2="174.6" y2="457" stroke="#c4c4c4" stroke-width="0.6"/><line x1="92" y1="464.6" x2="174.6" y2="464.6" stroke="#c4c4c4" stroke-width="0.6"/><line x1="92" y1="472.4" x2="174.6" y2="472.4" stroke="#c4c4c4" stroke-width="0.6"/><line x1="92" y1="480" x2="174.6" y2="480" stroke="#c4c4c4" stroke-width="0.6"/><line x1="110.3" y1="455" x2="110.3" y2="491" stroke="#bbb" stroke-width="0.5"/><line x1="126.5" y1="455" x2="126.5" y2="491" stroke="#bbb" stroke-width="0.5"/><line x1="142.4" y1="455" x2="142.4" y2="491" stroke="#bbb" stroke-width="0.5"/><line x1="158.4" y1="455" x2="158.4" y2="491" stroke="#bbb" stroke-width="0.5"/><line x1="94" y1="452" x2="94" y2="490" stroke="#888" stroke-width="0.6"/><line x1="93" y1="488.6" x2="177" y2="488.6" stroke="#888" stroke-width="0.6"/><polyline points="94.1,468.4 110.3,456.8 126.5,466.3 142.4,480 158.4,480 174.6,484.8" fill="none" stroke="#3a90d0" stroke-width="1.1"/><rect x="86.8" y="499" width="30.7" height="4.3" rx="0.8" fill="url(#tbl)"/><rect x="87" y="503.90000000000003" width="15" height="2.5" fill="#f2f2f2" stroke="#e4e4e4" stroke-width="0.3"/><rect x="102.3" y="503.90000000000003" width="15" height="2.5" fill="#fff" stroke="#eee" stroke-width="0.3"/><rect x="89" y="504.7" width="10" height="0.9" fill="#bbb"/><rect x="106.5" y="504.7" width="6" height="0.9" fill="#888"/><rect x="87" y="506.65000000000003" width="15" height="2.5" fill="#f2f2f2" stroke="#e4e4e4" stroke-width="0.3"/><rect x="102.3" y="506.65000000000003" width="15" height="2.5" fill="#fff" stroke="#eee" stroke-width="0.3"/><rect x="89" y="507.45" width="10" height="0.9" fill="#bbb"/><rect x="106.5" y="507.45" width="6" height="0.9" fill="#888"/><rect x="87" y="509.40000000000003" width="15" height="2.5" fill="#f2f2f2" stroke="#e4e4e4" stroke-width="0.3"/><rect x="102.3" y="509.40000000000003" width="15" height="2.5" fill="#fff" stroke="#eee" stroke-width="0.3"/><rect x="89" y="510.2" width="10" height="0.9" fill="#bbb"/><rect x="106.5" y="510.2" width="6" height="0.9" fill="#888"/><rect x="87" y="512.15" width="15" height="2.5" fill="#f2f2f2" stroke="#e4e4e4" stroke-width="0.3"/><rect x="102.3" y="512.15" width="15" height="2.5" fill="#fff" stroke="#eee" stroke-width="0.3"/><rect x="89" y="512.9499999999999" width="10" height="0.9" fill="#bbb"/><rect x="106.5" y="512.9499999999999" width="6" height="0.9" fill="#888"/><rect x="87" y="514.9" width="15" height="2.5" fill="#f2f2f2" stroke="#e4e4e4" stroke-width="0.3"/><rect x="102.3" y="514.9" width="15" height="2.5" fill="#fff" stroke="#eee" stroke-width="0.3"/><rect x="89" y="515.6999999999999" width="10" height="0.9" fill="#bbb"/><rect x="106.5" y="515.6999999999999" width="6" height="0.9" fill="#888"/><rect x="87" y="517.65" width="15" height="2.5" fill="#f2f2f2" stroke="#e4e4e4" stroke-width="0.3"/><rect x="102.3" y="517.65" width="15" height="2.5" fill="#fff" stroke="#eee" stroke-width="0.3"/><rect x="89" y="518.4499999999999" width="10" height="0.9" fill="#bbb"/><rect x="106.5" y="518.4499999999999" width="6" height="0.9" fill="#888"/><rect x="86.1" y="536" width="45.2" height="55.2" rx="1.5" fill="#fff" stroke="#e6e6e6" stroke-width="0.8"/><rect x="86.6" y="591.2" width="45.2" height="1" fill="#e0e0e0"/><rect x="100.7" y="544.5" width="16" height="3.3" rx="1" fill="#f0f0f0" stroke="#ddd" stroke-width="0.4"/><rect x="133.4" y="536" width="45.0" height="55.2" rx="1.5" fill="#fff" stroke="#e6e6e6" stroke-width="0.8"/><rect x="133.9" y="591.2" width="45.0" height="1" fill="#e0e0e0"/><rect x="147.9" y="544.5" width="16" height="3.3" rx="1" fill="#f0f0f0" stroke="#ddd" stroke-width="0.4"/><rect x="86.1" y="595.7" width="45.2" height="54.3" rx="1.5" fill="#fff" stroke="#e6e6e6" stroke-width="0.8"/><rect x="100.7" y="599.5" width="16" height="3.3" rx="1" fill="#f0f0f0" stroke="#ddd" stroke-width="0.4"/><rect x="133.4" y="595.7" width="45.0" height="54.3" rx="1.5" fill="#fff" stroke="#e6e6e6" stroke-width="0.8"/><rect x="147.9" y="599.5" width="16" height="3.3" rx="1" fill="#f0f0f0" stroke="#ddd" stroke-width="0.4"/><rect x="80" y="640" width="110" height="10" fill="#fff"/><rect x="80" y="537" width="110" height="6.5" fill="#fff"/><rect x="95.5" y="560.6" width="18.9" height="4.5" fill="#10a030"/><rect x="114.4" y="560.6" width="7.6" height="4.5" fill="#2070d0"/><rect x="91" y="576.0" width="16" height="2.6" fill="#eee"/><rect x="107" y="576.0" width="19" height="2.6" fill="#fff" stroke="#eee" stroke-width="0.3"/><rect x="91" y="579.6" width="16" height="2.6" fill="#eee"/><rect x="107" y="579.6" width="19" height="2.6" fill="#fff" stroke="#eee" stroke-width="0.3"/><rect x="91" y="583.2" width="16" height="2.6" fill="#eee"/><rect x="107" y="583.2" width="19" height="2.6" fill="#fad0c0" stroke="#eee" stroke-width="0.3"/><rect x="91" y="586.8" width="16" height="2.6" fill="#eee"/><rect x="107" y="586.8" width="19" height="2.6" fill="#fff" stroke="#eee" stroke-width="0.3"/><path d="M143.9,572.7 A11.8,11.8 0 0 1 147.4,564.4 L151.1,568.1 A6.5,6.5 0 0 0 149.2,572.7 Z" fill="#e01818"/><path d="M147.4,564.4 A11.8,11.8 0 0 1 155.7,560.9 L155.7,566.2 A6.5,6.5 0 0 0 151.1,568.1 Z" fill="#f0d020"/><path d="M155.7,560.9 A11.8,11.8 0 0 1 167.5,572.7 L162.2,572.7 A6.5,6.5 0 0 0 155.7,566.2 Z" fill="#20a030"/><path d="M149.2,572.7 A6.5,6.5 0 0 1 162.2,572.7 Z" fill="#e8e8e8"/><rect x="143" y="572.5" width="25" height="2" fill="#bbb"/><circle cx="108.7" cy="616.2" r="10.5" fill="#e81010"/><path d="M108.7,616.2 L103.5,607.1 A10.5,10.5 0 0 1 113.5,606.8 Z" fill="#f4d030"/><path d="M108.7,616.2 L113.5,606.8 A10.5,10.5 0 0 1 119.2,616.2 Z" fill="#20a030"/><rect x="91" y="631.0" width="16" height="2.6" fill="#40b050"/><rect x="107" y="631.0" width="19" height="2.6" fill="#fff" stroke="#eee" stroke-width="0.3"/><rect x="137.7" y="631.0" width="18" height="2.6" fill="#40b050"/><rect x="155.7" y="631.0" width="18" height="2.6" fill="#fff" stroke="#eee" stroke-width="0.3"/><rect x="91" y="634.6" width="16" height="2.6" fill="#f0c040"/><rect x="107" y="634.6" width="19" height="2.6" fill="#fff" stroke="#eee" stroke-width="0.3"/><rect x="137.7" y="634.6" width="18" height="2.6" fill="#f0c040"/><rect x="155.7" y="634.6" width="18" height="2.6" fill="#fff" stroke="#eee" stroke-width="0.3"/><rect x="91" y="638.2" width="16" height="2.6" fill="#e85050"/><rect x="107" y="638.2" width="19" height="2.6" fill="#fff" stroke="#eee" stroke-width="0.3"/><rect x="137.7" y="638.2" width="18" height="2.6" fill="#e85050"/><rect x="155.7" y="638.2" width="18" height="2.6" fill="#fff" stroke="#eee" stroke-width="0.3"/><rect x="137.7" y="613.5" width="13.8" height="4.7" fill="#10a030"/><rect x="151.5" y="613.5" width="4.3" height="4.7" fill="#f0b020"/><rect x="155.8" y="613.5" width="17.9" height="4.7" fill="#e81818"/><rect x="85.8" y="663.6" width="23.7" height="6.3" rx="1" fill="#606060"/><rect x="88" y="666" width="18" height="1.2" fill="#ccc"/><rect x="149.5" y="663.1" width="29.4" height="12.2" rx="1.5" fill="#f0f0f0"/><rect x="152" y="665" width="20" height="0.9" fill="#999"/><rect x="152" y="667" width="16" height="0.9" fill="#888"/><rect x="152" y="671" width="8" height="0.7" fill="#aaa"/><rect x="164" y="671" width="9" height="0.7" fill="#aaa"/><rect x="84.8" y="679.5" width="96" height="60" rx="2" fill="#fff" stroke="#e4e4e4" stroke-width="0.8"/><rect x="86" y="686.3" width="93.5" height="50" fill="#efefef"/><rect x="117" y="681.3" width="30" height="1.2" fill="#4a5aa8"/><line x1="88" y1="692.9" x2="173.5" y2="692.9" stroke="#c8c8c8" stroke-width="0.6"/><line x1="88" y1="700.5" x2="173.5" y2="700.5" stroke="#c8c8c8" stroke-width="0.6"/><line x1="88" y1="708.2" x2="173.5" y2="708.2" stroke="#c8c8c8" stroke-width="0.6"/><line x1="108.8" y1="692" x2="108.8" y2="716" stroke="#bbb" stroke-width="0.5"/><line x1="124.7" y1="692" x2="124.7" y2="716" stroke="#bbb" stroke-width="0.5"/><line x1="92.3" y1="687.5" x2="92.3" y2="716" stroke="#888" stroke-width="0.6"/><polyline points="92.3,707.4 108.8,692.9 124.7,699.6 140.8,715.2 158,715.2" fill="none" stroke="#f4a050" stroke-width="1.1"/></svg>
<div class="a" style="left:27px;top:216px;font-size:13px;color:#3b5a9a">Visual Reports</div>
<div class="a" style="left:38px;top:252px;font-size:12.7px;font-weight:bold;color:#2b4c8a">Examples</div>
<div class="a" style="left:38px;top:278px;font-size:13px;font-weight:bold;color:#2b4c8a">Reports</div>
<div class="a" style="left:54px;top:408px;font-size:12.5px;color:#111;letter-spacing:-0.2px">Accumulative Budget Actuals</div>
<div class="a" style="left:64px;top:526px;font-size:12.5px;color:#111;letter-spacing:-0.32px">Actuals per Project Period</div>
<div class="a" style="left:79px;top:644px;font-size:12.5px;color:#111;letter-spacing:-0.2px">All in One Indicators</div></div></div>
<div class="a" style="left:0;top:181px;width:235px;height:20px;border:1.3px solid #555;background:#fff"></div>
<div class="a" style="left:235.5px;top:181px;width:25px;height:20px;background:#f0f0f0"></div>
<div class="a" style="left:244px;top:201px;width:16px;height:515px;background:#f0f0f0"></div>
<div class="a" style="left:245px;top:345px;width:14px;height:155px;background:#c8c8c8"></div>
<svg class="a" style="left:0;top:0" width="263" height="736"><polygon points="247.5,183 255,190.5 247.5,198 240,190.5" fill="#c862d8"/><polyline points="242.6,193.1 247.5,188.2 252.4,193.1" fill="none" stroke="#f2dcf6" stroke-width="0.9"/><polyline points="245,195.5 247.5,193 250,195.5" fill="none" stroke="#f2dcf6" stroke-width="0.9"/><circle cx="243.4" cy="194.3" r="2.2" fill="#f0f0f0" stroke="#555" stroke-width="0.8"/><line x1="241.8" y1="196" x2="239.6" y2="198.3" stroke="#555" stroke-width="0.9"/><polyline points="248.2,212.5 251.6,208.3 255,212.5" fill="none" stroke="#444" stroke-width="1.6"/><polyline points="248.2,705.5 251.6,710 255,705.5" fill="none" stroke="#444" stroke-width="1.6"/><path d="M228,157.6 H233.5 M229,157.6 V164 M232.5,157.6 V164 M226.8,164.3 H234.5 M230.7,164.3 V168.8" fill="none" stroke="#222" stroke-width="1.1"/><path d="M243.3,158.3 L251.2,166.5 M251.2,158.3 L243.3,166.5" stroke="#222" stroke-width="1.3"/></svg>
<div class="a" style="left:0;top:716px;width:263px;height:20px;background:#f0f0f0"></div>
<div class="a" style="left:10px;top:719px;width:13px;height:13px;border:1px solid #777;background:#fff"></div>
<div class="a" style="left:25.5px;top:719px;font-size:11.3px;color:#333;letter-spacing:-0.1px">Only Installed Solutions</div>
<!--/LEFT-->

<!-- main content -->
<div class="a" style="left:313.5px;top:166px;font-size:24.5px;color:#78b89a;letter-spacing:-0.15px">Resources Chart</div>
<div class="a" style="left:314px;top:221.5px;font-size:14px;line-height:14px;color:#111;letter-spacing:0.145px">The "Resources Chart" report created for your project depicts in the table and in a Vertical Bar Chart the information about the resources</div>
<div class="a" style="left:314px;top:235.5px;font-size:14px;line-height:14px;color:#111;letter-spacing:0.19px">utilization in your project by days, so you can see the number of man-hours per each day within a reporting period in the chart and in the table</div>
<div class="a" style="left:314px;top:249.5px;font-size:14px;line-height:14px;color:#111;letter-spacing:0.17px">below the chart.</div>
<div class="a" style="left:1251px;top:220px;width:88px;height:23px;border:2px solid #0078d7;background:#e1e1e1;font-size:13.4px;color:#111;text-align:center;line-height:18.5px">Generate</div>
<div class="a" style="left:528px;top:284px;width:126px;height:30px;border:1px solid #4a4a4a;border-radius:3px;background:linear-gradient(100deg,#5a5a5a,#7a7a7a);"></div>
<div class="a" style="left:537.5px;top:292px;font-size:10.5px;font-weight:bold;color:#f4f4f4;letter-spacing:-0.35px">Release To Production</div>
<div class="a" style="left:842px;top:283px;width:144px;height:61px;border:1px solid #e4e4e4;border-radius:4px;background:#f1f1f1"></div>
<div class="a" style="left:855px;top:296px;font-size:9.7px;font-weight:bold;font-style:italic;color:#555;letter-spacing:-0.2px">Res ources&nbsp; Chart Report</div>
<div class="a" style="left:855px;top:322.5px;font-size:8px;color:#555">Report Date:</div>
<div class="a" style="left:914px;top:322.5px;font-size:8.2px;color:#555">2016-09-22</div>
<div class="a" style="left:523px;top:361px;width:469px;height:265px;border:1px solid #e6e6e6;border-radius:6px;background:#fff;box-shadow:2px 3px 5px rgba(0,0,0,0.28)"></div>
<div class="a" style="left:528px;top:393px;width:458px;height:228px;border:1px solid #e2e2e2;border-radius:3px;background:#f0f0f0"></div>
<div class="a" style="left:720.5px;top:369.5px;font-size:10.2px;font-style:italic;color:#1a2a80">Resources Chart</div>
<svg class="a" style="left:520px;top:355px" width="480" height="270" font-family="Liberation Sans">
<defs><linearGradient id="bg" x1="0" y1="0" x2="0" y2="1"><stop offset="0" stop-color="#0a4ea6"/><stop offset="1" stop-color="#1ea3de"/></linearGradient></defs>
<line x1="36.7" y1="72.50" x2="434.4" y2="72.50" stroke="#b4b4b4" stroke-width="1"/><line x1="36.7" y1="111.70" x2="434.4" y2="111.70" stroke="#b4b4b4" stroke-width="1"/><line x1="36.7" y1="150.90" x2="434.4" y2="150.90" stroke="#b4b4b4" stroke-width="1"/><line x1="36.7" y1="190.10" x2="434.4" y2="190.10" stroke="#b4b4b4" stroke-width="1"/>
<rect x="36.70" y="122.90" width="15.30" height="106.40" fill="url(#bg)" stroke="#1d4f8f" stroke-width="0.6"/>
<rect x="52.00" y="122.90" width="15.30" height="106.40" fill="url(#bg)" stroke="#1d4f8f" stroke-width="0.6"/>
<rect x="67.30" y="122.90" width="15.30" height="106.40" fill="url(#bg)" stroke="#1d4f8f" stroke-width="0.6"/>
<rect x="82.60" y="72.50" width="15.30" height="156.80" fill="url(#bg)" stroke="#1d4f8f" stroke-width="0.6"/>
<rect x="97.90" y="72.50" width="15.30" height="156.80" fill="url(#bg)" stroke="#1d4f8f" stroke-width="0.6"/>
<rect x="113.20" y="228.10" width="15.30" height="1.2" fill="#3a6aa8"/>
<rect x="128.50" y="228.10" width="15.30" height="1.2" fill="#3a6aa8"/>
<rect x="143.80" y="72.50" width="15.30" height="156.80" fill="url(#bg)" stroke="#1d4f8f" stroke-width="0.6"/>
<rect x="159.10" y="100.50" width="15.30" height="128.80" fill="url(#bg)" stroke="#1d4f8f" stroke-width="0.6"/>
<rect x="174.40" y="122.90" width="15.30" height="106.40" fill="url(#bg)" stroke="#1d4f8f" stroke-width="0.6"/>
<rect x="189.70" y="156.50" width="15.30" height="72.80" fill="url(#bg)" stroke="#1d4f8f" stroke-width="0.6"/>
<rect x="205.00" y="156.50" width="15.30" height="72.80" fill="url(#bg)" stroke="#1d4f8f" stroke-width="0.6"/>
<rect x="220.30" y="228.10" width="15.30" height="1.2" fill="#3a6aa8"/>
<rect x="235.60" y="228.10" width="15.30" height="1.2" fill="#3a6aa8"/>
<rect x="250.90" y="156.50" width="15.30" height="72.80" fill="url(#bg)" stroke="#1d4f8f" stroke-width="0.6"/>
<rect x="266.20" y="156.50" width="15.30" height="72.80" fill="url(#bg)" stroke="#1d4f8f" stroke-width="0.6"/>
<rect x="281.50" y="156.50" width="15.30" height="72.80" fill="url(#bg)" stroke="#1d4f8f" stroke-width="0.6"/>
<rect x="296.80" y="156.50" width="15.30" height="72.80" fill="url(#bg)" stroke="#1d4f8f" stroke-width="0.6"/>
<rect x="312.10" y="156.50" width="15.30" height="72.80" fill="url(#bg)" stroke="#1d4f8f" stroke-width="0.6"/>
<rect x="327.40" y="228.10" width="15.30" height="1.2" fill="#3a6aa8"/>
<rect x="342.70" y="228.10" width="15.30" height="1.2" fill="#3a6aa8"/>
<rect x="358.00" y="156.50" width="15.30" height="72.80" fill="url(#bg)" stroke="#1d4f8f" stroke-width="0.6"/>
<rect x="373.30" y="156.50" width="15.30" height="72.80" fill="url(#bg)" stroke="#1d4f8f" stroke-width="0.6"/>
<rect x="388.60" y="156.50" width="15.30" height="72.80" fill="url(#bg)" stroke="#1d4f8f" stroke-width="0.6"/>
<rect x="403.90" y="150.90" width="15.30" height="78.40" fill="url(#bg)" stroke="#1d4f8f" stroke-width="0.6"/>
<rect x="419.20" y="228.10" width="15.30" height="1.2" fill="#3a6aa8"/>
<line x1="36.700000000000045" y1="229.29999999999995" x2="450" y2="229.29999999999995" stroke="#666" stroke-width="1.2"/>
<polygon points="454,229.3 447.8,226 447.8,232.6" fill="#555"/>
<line x1="36.700000000000045" y1="229.29999999999995" x2="36.700000000000045" y2="59" stroke="#777" stroke-width="1.2"/>
<polygon points="36.700000000000045,54 32.5,62 41,62" fill="#555"/>
<text x="16" y="74.5" font-size="6.5" fill="#333">112.0</text>
<text x="29" y="113" font-size="4.5" fill="#666">84</text>
<text x="29" y="152" font-size="4.5" fill="#666">56</text>
<text x="29" y="191" font-size="4.5" fill="#666">28</text>
<text x="29" y="231" font-size="6.5" fill="#333">0</text>
<text x="20.5" y="49" font-size="6" font-style="italic" fill="#333">Man/Hours</text>
<text x="442.5" y="246.5" font-size="6.5" font-style="italic" font-weight="bold" fill="#444">Day</text>
<g fill="#8a8a8a"><text transform="translate(42.75,232) rotate(90)" font-size="4.7">2016-10-10</text>
<line x1="36.70" y1="229.29999999999995" x2="36.70" y2="232.29999999999995" stroke="#777" stroke-width="0.6"/>
<text transform="translate(58.05,232) rotate(90)" font-size="4.7">2016-10-11</text>
<line x1="52.00" y1="229.29999999999995" x2="52.00" y2="232.29999999999995" stroke="#777" stroke-width="0.6"/>
<text transform="translate(73.35,232) rotate(90)" font-size="4.7">2016-10-12</text>
<line x1="67.30" y1="229.29999999999995" x2="67.30" y2="232.29999999999995" stroke="#777" stroke-width="0.6"/>
<text transform="translate(88.65,232) rotate(90)" font-size="4.7">2016-10-13</text>
<line x1="82.60" y1="229.29999999999995" x2="82.60" y2="232.29999999999995" stroke="#777" stroke-width="0.6"/>
<text transform="translate(103.95,232) rotate(90)" font-size="4.7">2016-10-14</text>
<line x1="97.90" y1="229.29999999999995" x2="97.90" y2="232.29999999999995" stroke="#777" stroke-width="0.6"/>
<text transform="translate(119.25,232) rotate(90)" font-size="4.7">2016-10-15</text>
<line x1="113.20" y1="229.29999999999995" x2="113.20" y2="232.29999999999995" stroke="#777" stroke-width="0.6"/>
<text transform="translate(134.55,232) rotate(90)" font-size="4.7">2016-10-16</text>
<line x1="128.50" y1="229.29999999999995" x2="128.50" y2="232.29999999999995" stroke="#777" stroke-width="0.6"/>
<text transform="translate(149.85,232) rotate(90)" font-size="4.7">2016-10-17</text>
<line x1="143.80" y1="229.29999999999995" x2="143.80" y2="232.29999999999995" stroke="#777" stroke-width="0.6"/>
<text transform="translate(165.15,232) rotate(90)" font-size="4.7">2016-10-18</text>
<line x1="159.10" y1="229.29999999999995" x2="159.10" y2="232.29999999999995" stroke="#777" stroke-width="0.6"/>
<text transform="translate(180.45,232) rotate(90)" font-size="4.7">2016-10-19</text>
<line x1="174.40" y1="229.29999999999995" x2="174.40" y2="232.29999999999995" stroke="#777" stroke-width="0.6"/>
<text transform="translate(195.75,232) rotate(90)" font-size="4.7">2016-10-20</text>
<line x1="189.70" y1="229.29999999999995" x2="189.70" y2="232.29999999999995" stroke="#777" stroke-width="0.6"/>
<text transform="translate(211.05,232) rotate(90)" font-size="4.7">2016-10-21</text>
<line x1="205.00" y1="229.29999999999995" x2="205.00" y2="232.29999999999995" stroke="#777" stroke-width="0.6"/>
<text transform="translate(226.35,232) rotate(90)" font-size="4.7">2016-10-22</text>
<line x1="220.30" y1="229.29999999999995" x2="220.30" y2="232.29999999999995" stroke="#777" stroke-width="0.6"/>
<text transform="translate(241.65,232) rotate(90)" font-size="4.7">2016-10-23</text>
<line x1="235.60" y1="229.29999999999995" x2="235.60" y2="232.29999999999995" stroke="#777" stroke-width="0.6"/>
<text transform="translate(256.95,232) rotate(90)" font-size="4.7">2016-10-24</text>
<line x1="250.90" y1="229.29999999999995" x2="250.90" y2="232.29999999999995" stroke="#777" stroke-width="0.6"/>
<text transform="translate(272.25,232) rotate(90)" font-size="4.7">2016-10-25</text>
<line x1="266.20" y1="229.29999999999995" x2="266.20" y2="232.29999999999995" stroke="#777" stroke-width="0.6"/>
<text transform="translate(287.55,232) rotate(90)" font-size="4.7">2016-10-26</text>
<line x1="281.50" y1="229.29999999999995" x2="281.50" y2="232.29999999999995" stroke="#777" stroke-width="0.6"/>
<text transform="translate(302.85,232) rotate(90)" font-size="4.7">2016-10-27</text>
<line x1="296.80" y1="229.29999999999995" x2="296.80" y2="232.29999999999995" stroke="#777" stroke-width="0.6"/>
<text transform="translate(318.15,232) rotate(90)" font-size="4.7">2016-10-28</text>
<line x1="312.10" y1="229.29999999999995" x2="312.10" y2="232.29999999999995" stroke="#777" stroke-width="0.6"/>
<text transform="translate(333.45,232) rotate(90)" font-size="4.7">2016-10-29</text>
<line x1="327.40" y1="229.29999999999995" x2="327.40" y2="232.29999999999995" stroke="#777" stroke-width="0.6"/>
<text transform="translate(348.75,232) rotate(90)" font-size="4.7">2016-10-30</text>
<line x1="342.70" y1="229.29999999999995" x2="342.70" y2="232.29999999999995" stroke="#777" stroke-width="0.6"/>
<text transform="translate(364.05,232) rotate(90)" font-size="4.7">2016-10-31</text>
<line x1="358.00" y1="229.29999999999995" x2="358.00" y2="232.29999999999995" stroke="#777" stroke-width="0.6"/>
<text transform="translate(379.35,232) rotate(90)" font-size="4.7">2016-11-01</text>
<line x1="373.30" y1="229.29999999999995" x2="373.30" y2="232.29999999999995" stroke="#777" stroke-width="0.6"/>
<text transform="translate(394.65,232) rotate(90)" font-size="4.7">2016-11-02</text>
<line x1="388.60" y1="229.29999999999995" x2="388.60" y2="232.29999999999995" stroke="#777" stroke-width="0.6"/>
<text transform="translate(409.95,232) rotate(90)" font-size="4.7">2016-11-03</text>
<line x1="403.90" y1="229.29999999999995" x2="403.90" y2="232.29999999999995" stroke="#777" stroke-width="0.6"/>
<text transform="translate(425.25,232) rotate(90)" font-size="4.7">2016-11-04</text>
<line x1="419.20" y1="229.29999999999995" x2="419.20" y2="232.29999999999995" stroke="#777" stroke-width="0.6"/></g>
</svg>
<!-- tables -->
<div class="a" style="left:529px;top:638px;width:61px;height:17px;border-radius:3px 3px 2px 2px;background:linear-gradient(#a2a2a2,#6e6e6e);color:#fff;font-size:9px;font-style:italic;text-align:center;line-height:17px">Day</div><div class="a" style="left:591px;top:638px;width:62px;height:17px;border-radius:3px 3px 2px 2px;background:linear-gradient(#a2a2a2,#6e6e6e);color:#fff;font-size:9px;font-style:italic;text-align:center;line-height:17px">Man-hours</div><div class="a" style="left:529px;top:656px;width:61px;height:13px;border:1px solid #e2e2e2;border-radius:2px;background:#efefef;color:#333;font-size:8.7px;text-align:center;line-height:11px">2016- 10-10</div><div class="a" style="left:591px;top:656px;width:62px;height:13px;border:1px solid #ececec;border-radius:2px;background:#fff;color:#222;font-size:8.9px;font-style:italic;text-align:center;line-height:11px">76</div><div class="a" style="left:529px;top:669px;width:61px;height:13px;border:1px solid #e2e2e2;border-radius:2px;background:#efefef;color:#333;font-size:8.7px;text-align:center;line-height:11px">2016- 10-11</div><div class="a" style="left:591px;top:669px;width:62px;height:13px;border:1px solid #ececec;border-radius:2px;background:#fff;color:#222;font-size:8.9px;font-style:italic;text-align:center;line-height:11px">76</div><div class="a" style="left:659px;top:638px;width:61px;height:17px;border-radius:3px 3px 2px 2px;background:linear-gradient(#a2a2a2,#6e6e6e);color:#fff;font-size:9px;font-style:italic;text-align:center;line-height:17px">Day</div><div class="a" style="left:720px;top:638px;width:62px;height:17px;border-radius:3px 3px 2px 2px;background:linear-gradient(#a2a2a2,#6e6e6e);color:#fff;font-size:9px;font-style:italic;text-align:center;line-height:17px">Man-hours</div><div class="a" style="left:659px;top:656px;width:61px;height:13px;border:1px solid #e2e2e2;border-radius:2px;background:#efefef;color:#333;font-size:8.7px;text-align:center;line-height:11px">2016- 10-26</div><div class="a" style="left:720px;top:656px;width:62px;height:13px;border:1px solid #ececec;border-radius:2px;background:#fff;color:#222;font-size:8.9px;font-style:italic;text-align:center;line-height:11px">52</div><div class="a" style="left:659px;top:669px;width:61px;height:13px;border:1px solid #e2e2e2;border-radius:2px;background:#efefef;color:#333;font-size:8.7px;text-align:center;line-height:11px">2016- 10-27</div><div class="a" style="left:720px;top:669px;width:62px;height:13px;border:1px solid #ececec;border-radius:2px;background:#fff;color:#222;font-size:8.9px;font-style:italic;text-align:center;line-height:11px">52</div>
<div class="a" style="left:560px;top:700px;width:70px;height:25px;border:1px solid #cfcfcf;border-radius:4px;background:linear-gradient(#fbfbfb,#e3e3e3);font-size:11.7px;color:#555;text-align:center;line-height:21px">Previous</div>
<div class="a" style="left:751px;top:700px;width:70px;height:25px;border:1px solid #a9bfd6;border-radius:4px;background:linear-gradient(#dbe6f2,#9fbcdb);font-size:11.7px;color:#555;text-align:center;line-height:21px">Home</div>
<div class="a" style="left:941px;top:700px;width:70px;height:25px;border:1px solid #cfcfcf;border-radius:4px;background:linear-gradient(#fbfbfb,#e3e3e3);font-size:11.7px;color:#555;text-align:center;line-height:21px">Next</div>

<!--RIGHT-->
<div class="a" style="left:1393px;top:150px;width:1px;height:586px;background:#d5d5d5"></div>
<div class="a" style="left:1394px;top:150px;width:300px;height:26px;background:#2b579a"></div>
<div class="a" style="left:1399.5px;top:154px;font-size:15.2px;color:#fff;letter-spacing:0px">Report Parameters</div>
<svg class="a" style="left:0;top:0" width="1694" height="736"><path d="M1661.3,156.6 H1666.8 M1662.3,156.6 V163 M1665.8,156.6 V163 M1660.1,163.3 H1667.8 M1664,163.3 V167.8" fill="none" stroke="#fff" stroke-width="1.1"/><path d="M1677,158 L1685,166 M1685,158 L1677,166" stroke="#fff" stroke-width="1.4"/><polygon points="1408,191.8 1417.4,191.8 1412.7,197" fill="#2b579a"/><line x1="1472" y1="202.5" x2="1694" y2="202.5" stroke="#a0a0a0" stroke-width="1"/><rect x="1405.5" y="216.5" width="260" height="104" fill="#fff" stroke="#8a8f96" stroke-width="1"/><line x1="1417" y1="228.8" x2="1423" y2="228.8" stroke="#aaa" stroke-width="1" stroke-dasharray="1,1"/><rect x="1427.5" y="222.5" width="12.5" height="12.5" fill="#fff" stroke="#222" stroke-width="1.1"/><polyline points="1430.2,228.6 1432.8,231.4 1437.6,225.4" fill="none" stroke="#111" stroke-width="1.7"/></svg>
<div class="a" style="left:1421px;top:187px;font-size:13px;color:#2b579a">Projects</div>
<div class="a" style="left:1448px;top:221px;font-size:14.2px;color:#111">Commercial Construction</div>
<!--/RIGHT-->
<!--STATUS-->
<div class="a" style="left:0;top:736px;width:1694px;height:20px;background:#2b579a"></div>
<div class="a" style="left:5px;top:739.5px;font-size:12px;color:#fff;letter-spacing:-0.1px">Ready</div>
<div class="a" style="left:860.3px;top:739.5px;font-size:12px;color:#fff;letter-spacing:-0.1px">Budget: -</div>
<div class="a" style="left:1024.5px;top:739.5px;font-size:12px;color:#fff;letter-spacing:-0.1px">Actual Cost: -</div>
<div class="a" style="left:1198.3px;top:739.5px;font-size:12px;color:#fff;letter-spacing:-0.1px">Profit: -</div>
<svg class="a" style="left:0;top:0" width="1694" height="756"><rect x="1373" y="739.2" width="16" height="1.3" fill="#fff"/><rect x="1373" y="739.2" width="1.3" height="2.5" fill="#fff"/><rect x="1387.7" y="739.2" width="1.3" height="2.5" fill="#fff"/><rect x="1375" y="742.5" width="8" height="2.5" fill="#fff"/><rect x="1383" y="742.5" width="5" height="2.5" fill="#5ab8f0"/><rect x="1378" y="746" width="6" height="2.5" fill="#fff"/><rect x="1384" y="746" width="5" height="2.5" fill="#5ab8f0"/><rect x="1374" y="750" width="7" height="2.8" fill="#fff"/><rect x="1381" y="750" width="4" height="2.8" fill="#5ab8f0"/><circle cx="1403.5" cy="741.8" r="2.6" fill="#fff"/><path d="M1398.5,750 V747 Q1398.5,745 1400.5,745 H1406.5 Q1408.5,745 1408.5,747 V750 Z" fill="#5ab8f0"/><path d="M1409,746.5 L1404.5,753.3 H1415.2 Z" fill="#fff"/><polygon points="1424.7,740 1432,741.5 1432,754.5 1424.7,752.5" fill="#fff"/><polygon points="1432,740 1436,740 1436,753 1432,754.5" fill="#cfe4f8"/><rect x="1434" y="741.8" width="6.8" height="2.8" fill="#5ab8f0"/><rect x="1434" y="746" width="6" height="2.5" fill="#5ab8f0"/><circle cx="1453.3" cy="740.7" r="1.5" fill="#fff"/><rect x="1451" y="742.3" width="4.8" height="2" fill="#5ab8f0"/><rect x="1458.5" y="740.3" width="9" height="3" rx="1.5" fill="#9ad0f4"/><polygon points="1453.3,745 1450.7,748.5 1456,748.5" fill="#fff"/><rect x="1458.5" y="745.8" width="9" height="3" rx="1.5" fill="#5ab8f0"/><polygon points="1453.3,750 1450.7,753.5 1456,753.5" fill="#fff"/><rect x="1458.5" y="750.8" width="9" height="3" rx="1.5" fill="#5ab8f0"/><rect x="1550.3" y="746.3" width="5" height="1.5" fill="#fff"/><rect x="1556.8" y="741" width="8" height="10.3" fill="#fff"/><rect x="1565" y="746.6" width="93.7" height="1" fill="#fff"/><rect x="1663.2" y="746.2" width="8" height="1.6" fill="#fff"/><rect x="1666.4" y="743" width="1.6" height="8" fill="#fff"/></svg>
<!--/STATUS-->
</body></html>
